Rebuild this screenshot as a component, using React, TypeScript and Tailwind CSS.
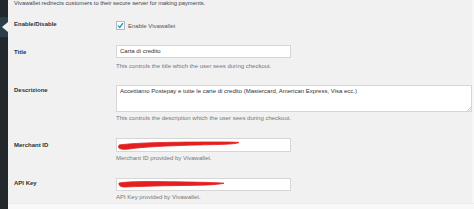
import React from "react";

const font = { fontFamily: '"Liberation Sans", Arial, sans-serif' };

function Scribble({ d }: { d: string }) {
  return (
    <svg className="absolute left-0 top-0" width="176" height="14" viewBox="0 0 176 14">
      <path d={d} fill="#e41f1f" stroke="#e41f1f" strokeWidth="0.8" strokeLinejoin="round" />
    </svg>
  );
}

export default function App() {
  return (
    <div className="flex w-[474px] h-[209px] overflow-hidden bg-[#f1f1f1]" style={font}>
      {/* sidebar */}
      <div className="w-[8px] shrink-0 bg-[#23282d] flex flex-col">
        <div className="h-[17px]" />
        <div className="h-[20px] bg-[#2a3e4c] flex items-center justify-end">
          <svg width="6" height="10" viewBox="0 0 6 10">
            <polygon points="6,0 0,5 6,10" fill="#f1f1f1" />
          </svg>
        </div>
      </div>
      {/* content */}
      <div className="flex-1 flex flex-col">
        <div className="flex-1 flex flex-col pl-[6px] border-r-2 border-[#f7f7f7]">
          <div className="h-[20px]">
            <p className="text-[5.8px] leading-[8px] mt-[-1px] text-[#3c434a]">
              Vivawallet redirects customers to their secure server for making payments.
            </p>
          </div>

          {/* Enable */}
          <div className="h-[25px] flex">
            <div className="w-[102px] text-[6px] leading-[8px] font-bold text-[#2c3338] pt-[0px]">Enable/Disable</div>
            <div className="flex items-center gap-[3px] mt-[1px] h-[9px]">
              <span className="w-[9px] h-[9px] bg-white border border-[#b4b9be] flex items-center justify-center">
                <svg width="7" height="7" viewBox="0 0 7 7">
                  <path d="M1 3.6 L2.8 5.4 L6 1.2" stroke="#1e8cbe" strokeWidth="1.3" fill="none" />
                </svg>
              </span>
              <span className="text-[6px] leading-[8px] text-[#555]">Enable Vivawallet</span>
            </div>
          </div>

          {/* Title */}
          <div className="h-[40px] flex">
            <div className="w-[102px] text-[6px] leading-[8px] font-bold text-[#2c3338] pt-[3px]">Title</div>
            <div className="flex flex-col">
              <div className="w-[175px] h-[13px] bg-white border border-[#d6d6d6] pl-[3px] text-[6px] leading-[11px] text-[#333]">
                Carta di credito
              </div>
              <p className="mt-[4px] text-[6px] leading-[8px] text-[#777]">
                This controls the title which the user sees during checkout.
              </p>
            </div>
          </div>

          {/* Descrizione */}
          <div className="h-[53px] flex">
            <div className="w-[102px] text-[6px] leading-[8px] font-bold text-[#2c3338] pt-[1px]">Descrizione</div>
            <div className="flex-1 flex flex-col">
              <div className="relative h-[27px] bg-white border border-[#d6d6d6] pl-[3px] pt-[1px] text-[6px] leading-[8px] text-[#333]">
                Accettiamo Postepay e tutte le carte di credito (Mastercard, American Express, Visa ecc.)
                <svg className="absolute right-0 bottom-0" width="5" height="5" viewBox="0 0 5 5">
                  <path d="M5 1 L1 5 M5 3 L3 5" stroke="#aaa" strokeWidth="0.6" />
                </svg>
              </div>
              <p className="mt-[2px] text-[6px] leading-[8px] text-[#777]">
                This controls the description which the user sees during checkout.
              </p>
            </div>
          </div>

          {/* Merchant ID */}
          <div className="h-[40px] flex">
            <div className="w-[102px] text-[6px] leading-[8px] font-bold text-[#2c3338] pt-[3px]">Merchant ID</div>
            <div className="flex flex-col">
              <div className="relative w-[175px] h-[14px] bg-white border border-[#d6d6d6]">
                <Scribble d="M2 6 C20 3.5 60 3 95 3 C108 3 118 3 122 3.5 C118 5.5 100 5.5 80 6 C50 6.8 25 8 12 10 C6 10.8 2 10 1.5 8.5 Z" />
              </div>
              <p className="mt-[2px] text-[6px] leading-[8px] text-[#777]">Merchant ID provided by Vivawallet.</p>
            </div>
          </div>

          {/* API Key */}
          <div className="h-[25px] flex">
            <div className="w-[102px] text-[6px] leading-[8px] font-bold text-[#2c3338] pt-[1px]">API Key</div>
            <div className="flex flex-col">
              <div className="relative w-[175px] h-[13px] bg-white border border-[#d6d6d6]">
                <Scribble d="M2 4 C15 2 40 2.5 70 3 C88 3.3 100 3.6 107 4.2 C100 6 85 6.2 65 6.5 C40 6.8 20 7.5 8 8 C3 8 1.5 6 2 4 Z" />
              </div>
              <p className="mt-[2px] text-[6px] leading-[8px] text-[#777]">API Key provided by Vivawallet.</p>
            </div>
          </div>
        </div>
        <div className="h-[6px] bg-[#f8f8f8] border-t border-[#eaeaea]" />
      </div>
    </div>
  );
}
